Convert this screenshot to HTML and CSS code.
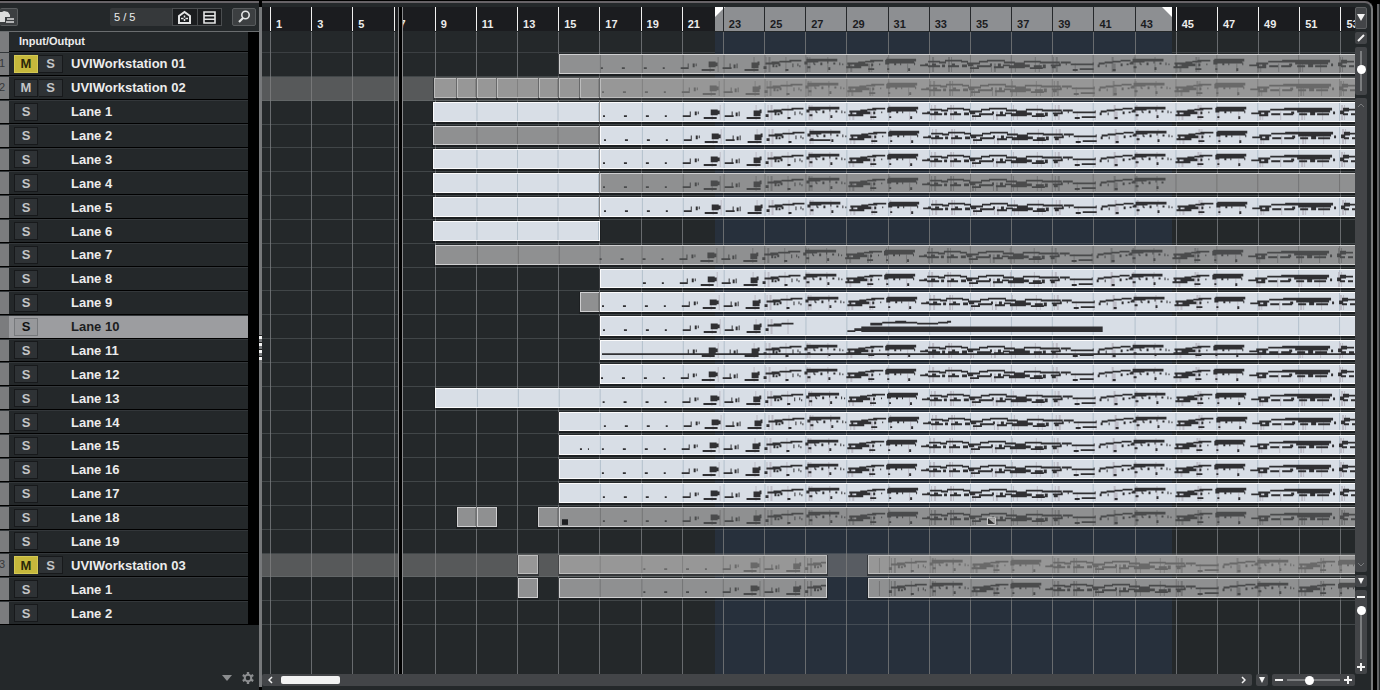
FILE: index.html
```html
<!DOCTYPE html>
<html lang="en">
<head>
  <meta charset="utf-8">
  <title>Project</title>
  <link rel="stylesheet" href="styles.css">
</head>
<body>

<div class="window">
  <aside class="track-panel">
    <div class="toolbar">
      <button class="tool-button tool-cut" aria-label="Track presets">
        <svg width="15" height="14" viewBox="0 0 15 14"><path fill="#dcdddd" d="M0 2h2l2-1 4 1 2 3v2H5v5H0z"/><path stroke="#dcdddd" stroke-width="1.600" d="M7 9h7M6 12h8"/></svg>
      </button>
      <span class="track-count">5 / 5</span>
      <div class="tool-group">
        <button aria-label="Home view">
          <svg width="15" height="15" viewBox="0 0 15 15"><path fill="none" stroke="#e4e5e5" stroke-width="2" d="M2 13V6l5.500-4L13 6v7z"/><path stroke="#e4e5e5" stroke-width="1.500" d="M7.500 5.500v2M7.500 9v2M4 8.500h2.500M8.500 8.500H11"/></svg>
        </button>
        <button aria-label="List view">
          <svg width="13" height="13" viewBox="0 0 13 13"><path fill="none" stroke="#e4e5e5" stroke-width="1.600" d="M1 1h11v11H1zM1 4.700h11M1 8.300h11"/></svg>
        </button>
      </div>
      <button class="tool-button" aria-label="Find tracks">
        <svg width="14" height="14" viewBox="0 0 14 14"><circle cx="8.500" cy="5" r="3.700" fill="none" stroke="#e4e5e5" stroke-width="1.600"/><path stroke="#e4e5e5" stroke-width="2.200" d="M6 8l-4 4"/></svg>
      </button>
    </div>
    <div class="io-row"><span>Input/Output</span></div>
    <div class="track-list" id="trackList"></div>
    <div class="track-footer">
      <button aria-label="Track options"><svg width="10" height="6"><path fill="#8b8d8f" d="M0 0h10L5 6z"/></svg></button>
      <button aria-label="Settings">
        <svg width="12" height="12" viewBox="0 0 12 12"><circle cx="6" cy="6" r="3.300" fill="none" stroke="#8b8d8f" stroke-width="2"/><path stroke="#8b8d8f" stroke-width="2.400" d="M6 0v2.500M6 9.500V12M.8 3l2 1.200M9.200 7.800l2 1.200M.8 9l2-1.200M9.200 4.200l2-1.200"/></svg>
      </button>
    </div>
  </aside>

  <div class="divider"><i></i><i></i><i></i><i></i></div>

  <main class="project">
    <div class="timeline">
      <div class="ruler" id="ruler"></div>
      <div class="canvas">
        <div class="selection" id="selection"></div>
        <div class="grid" id="grid"></div>
        <div class="lanes" id="lanes"></div>
      </div>
      <div class="playhead" id="playhead"></div>
    </div>

    <div class="side-bar">
      <button class="side-top" aria-label="Ruler options"><svg width="8" height="8"><path fill="#f2f2f2" d="M0 0h8L4 7z"/></svg></button>
      <button class="side-pencil" aria-label="Edit"><svg width="8" height="8"><path stroke="#f2f2f2" stroke-width="2" d="M1 7l6-6"/></svg></button>
      <div class="side-slider"><input type="range" class="vertical" value="45" aria-label="Waveform zoom"></div>
      <div class="side-scroll">
        <button aria-label="Scroll up"><svg width="8" height="5"><path fill="none" stroke="#77797b" d="M1 4l3-3 3 3"/></svg></button>
        <button aria-label="Scroll down"><svg width="8" height="5"><path fill="none" stroke="#77797b" d="M1 1l3 3 3-3"/></svg></button>
      </div>
      <button class="side-menu" aria-label="Vertical zoom presets"><svg width="6" height="6"><path fill="#f2f2f2" d="M0 0h6L3 6z"/></svg></button>
      <div class="side-zoom">
        <button aria-label="Zoom out vertically"><svg width="8" height="8"><path fill="#f2f2f2" d="M0 3h8v2H0z"/></svg></button>
        <input type="range" class="vertical" value="0" aria-label="Vertical zoom">
        <button aria-label="Zoom in vertically"><svg width="8" height="8"><path fill="#f2f2f2" d="M0 3h3V0h2v3h3v2H5v3H3V5H0z"/></svg></button>
      </div>
    </div>

    <div class="bottom-bar">
      <div class="bottom-scroll">
        <button aria-label="Scroll left"><svg width="5" height="8"><path fill="none" stroke="#f2f2f2" stroke-width="1.500" d="M4 1L1 4l3 3"/></svg></button>
        <div class="scroll-thumb"></div>
        <button aria-label="Scroll right"><svg width="5" height="8"><path fill="none" stroke="#f2f2f2" stroke-width="1.500" d="M1 1l3 3-3 3"/></svg></button>
      </div>
      <button class="bottom-menu" aria-label="Horizontal zoom presets"><svg width="6" height="6"><path fill="#f2f2f2" d="M0 0h6L3 6z"/></svg></button>
      <div class="bottom-zoom">
        <button aria-label="Zoom out"><svg width="8" height="8"><path fill="#f2f2f2" d="M0 3h8v2H0z"/></svg></button>
        <input type="range" value="40" aria-label="Horizontal zoom">
        <button aria-label="Zoom in"><svg width="8" height="8"><path fill="#f2f2f2" d="M0 3h3V0h2v3h3v2H5v3H3V5H0z"/></svg></button>
      </div>
    </div>
  </main>
  <div class="next-window"></div>
</div>

<script>
// positions are in timeline units, the visible part runs from VIEW_START to VIEW_END
const VIEW_START = 262;
const VIEW_END = 1355;
const SPAN = VIEW_END - VIEW_START;
const FIRST_BAR = 270;
const TWO_BARS = 41.17;
const RANGE = [715, 1172];

const percent = (value) => (value / SPAN) * 100 + "%";

// the riff: x, y, width, height
const intro = [
  [602, 13, 2, 1], [623, 13, 3, 1], [645, 13, 3, 1], [664, 13, 2, 1],
  [682, 13, 8, 1], [689, 9, 1, 4], [694, 9, 2, 3], [697, 9, 1, 2],
  [703, 15, 13, 1], [710, 7, 7, 5], [717, 8, 2, 3],
  [724, 13, 9, 1], [731, 9, 1, 4], [735, 10, 2, 3], [738, 9, 1, 4],
  [746, 15, 14, 1], [753, 8, 7, 5], [759, 7, 2, 3]
];
const rise = [
  [765, 12, 3, 2], [767, 8, 6, 1], [773, 7, 8, 2], [781, 6, 12, 1], [791, 5, 12, 1],
  [774, 10, 2, 2], [777, 11, 2, 1], [780, 9, 2, 2], [787, 15, 3, 1],
  [794, 9, 1, 3], [799, 9, 1, 2], [801, 11, 1, 1]
];
const flat = [
  [806, 7, 3, 2], [808, 4, 31, 2], [808, 6, 12, 1], [809, 12, 3, 1], [815, 7, 1, 2],
  [816, 9, 1, 1], [822, 8, 2, 2], [830, 13, 2, 2], [829, 6, 1, 2], [835, 8, 2, 1], [841, 8, 1, 2], [844, 9, 1, 1]
];
const turn = [
  [849, 8, 12, 1], [848, 12, 15, 1], [850, 10, 2, 1], [856, 10, 6, 2], [860, 7, 7, 1],
  [861, 9, 9, 2], [867, 6, 9, 1], [872, 5, 13, 1], [870, 14, 6, 1], [873, 9, 2, 2], [881, 9, 1, 1]
];
const bold = [
  [887, 5, 4, 4], [888, 4, 30, 2], [890, 6, 26, 2], [889, 14, 2, 1], [896, 8, 2, 2],
  [902, 8, 1, 2], [910, 14, 2, 2], [916, 8, 1, 2], [922, 10, 7, 1], [927, 9, 3, 2]
];
const weave = [
  [930, 6, 12, 1], [930, 11, 12, 1], [934, 9, 4, 1], [941, 7, 7, 1], [944, 10, 3, 2],
  [947, 5, 17, 1], [950, 11, 11, 1], [954, 9, 3, 2], [963, 6, 7, 1], [964, 10, 5, 2],
  [969, 8, 13, 1], [970, 10, 5, 1], [972, 13, 9, 1], [981, 6, 9, 1], [979, 11, 14, 1],
  [989, 5, 18, 1], [992, 9, 2, 2], [996, 12, 10, 1], [1000, 9, 3, 3], [1006, 7, 11, 1],
  [1005, 10, 7, 1], [1011, 11, 16, 2], [1016, 8, 11, 2], [1026, 6, 17, 1], [1027, 10, 5, 2],
  [1032, 13, 13, 1], [1036, 11, 8, 2], [1042, 7, 12, 1], [1045, 10, 3, 3], [1053, 7, 9, 1],
  [1053, 10, 8, 1], [1054, 12, 4, 1], [1061, 9, 2, 2], [1063, 7, 10, 1], [1068, 8, 1, 2],
  [1073, 9, 8, 1], [1080, 9, 15, 1], [1075, 15, 5, 1], [1082, 14, 8, 1], [1090, 14, 6, 1], [1095, 8, 1, 2]
];
const climb = [
  [1100, 10, 2, 2], [1101, 8, 6, 1], [1107, 7, 8, 1], [1115, 6, 8, 1], [1123, 5, 10, 1],
  [1108, 10, 1, 2], [1115, 15, 3, 1], [1123, 9, 2, 2], [1129, 9, 2, 1], [1132, 8, 1, 1]
];
const ending = [
  [1252, 10, 10, 1], [1259, 8, 12, 1], [1260, 12, 9, 1], [1271, 6, 14, 1], [1265, 9, 4, 2],
  [1272, 11, 9, 1], [1285, 5, 48, 2], [1284, 11, 10, 1], [1292, 9, 3, 2], [1298, 7, 33, 2],
  [1300, 11, 8, 1], [1311, 10, 5, 2], [1318, 11, 12, 1], [1334, 9, 2, 2],
  [1341, 8, 4, 3], [1344, 5, 6, 3], [1350, 6, 7, 1], [1344, 11, 5, 1], [1352, 11, 5, 1]
];
const move = (notes, dx) => notes.map(([x, y, w, h]) => [x + dx, y, w, h]);
const riff = [
  ...intro, ...rise, ...flat, ...turn, ...bold, ...weave, ...climb,
  ...move(flat, 327), ...move(turn, 328), ...move(bold.slice(0, 8), 329), ...ending
];
const solo = [
  ...intro, ...rise.slice(0, 4),
  [847, 14, 8, 1], [854, 12, 8, 2], [861, 10, 242, 5],
  [870, 6, 12, 2], [882, 5, 13, 1], [895, 4, 11, 2], [906, 5, 11, 1], [917, 6, 21, 1], [938, 5, 10, 1], [947, 4, 4, 1]
];
const ghosts = [
  711, 719, 755, 767, 770, 787, 808, 811, 829, 849, 852, 870, 873, 889, 909, 931, 934, 950, 953,
  972, 975, 993, 996, 1013, 1017, 1037, 1041, 1055, 1058, 1077, 1095, 1114, 1116, 1136, 1157,
  1179, 1182, 1198, 1201, 1218, 1239, 1260, 1263, 1281, 1302, 1305, 1323, 1342, 1345
];

const full = (start, look = "", notes = riff, dx = 0) => ({ start, end: 1358, look, notes, dx });
const empty = (start, end, look = "") => ({ start, end, look, notes: [], dx: 0 });
const third = (look) => [
  empty(518, 538, look),
  { start: 559, end: 827, look, notes: riff, dx: 41 },
  { start: 868, end: 1358, look, notes: riff.filter((n) => n[0] > 764), dx: 123 }
];

const tracks = [
  { name: "UVIWorkstation 01", number: 1, mute: true, clips: [full(559, "muted", riff, -2)] },
  { name: "UVIWorkstation 02", number: 2, folder: true, clips: [
    empty(434, 457, "shade"), empty(457, 477, "shade"), empty(477, 497, "shade"), empty(497, 539, "shade"),
    empty(539, 559, "shade"), empty(559, 580, "shade"), empty(580, 600, "shade"), full(600, "shade", riff, -1)] },
  { name: "Lane 1", clips: [empty(433, 600), full(600)] },
  { name: "Lane 2", clips: [empty(433, 600, "muted"), full(600, "", [...riff, [808, 13, 21, 1]], 1)] },
  { name: "Lane 3", clips: [empty(433, 600), full(600)] },
  { name: "Lane 4", clips: [empty(433, 600), full(600, "muted", riff.filter((n) => n[0] < 1163))] },
  { name: "Lane 5", clips: [empty(433, 600), full(600, "", riff, 1)] },
  { name: "Lane 6", clips: [empty(433, 600)] },
  { name: "Lane 7", clips: [full(435, "muted", riff, -3)] },
  { name: "Lane 8", clips: [full(600, "", riff.slice(2), -3)] },
  { name: "Lane 9", clips: [empty(580, 600, "muted"), full(600, "", riff, -1)] },
  { name: "Lane 10", selected: true, clips: [full(600, "", solo)] },
  { name: "Lane 11", clips: [full(600, "", [...riff.slice(4), [603, 13, 755, 1]], -2)] },
  { name: "Lane 12", clips: [full(600, "", riff, -2)] },
  { name: "Lane 13", clips: [full(435, "", riff, 0)] },
  { name: "Lane 14", clips: [full(559, "", riff, 1)] },
  { name: "Lane 15", clips: [full(559, "", [[580, 13, 2, 1], [588, 13, 1, 1], ...riff], -1)] },
  { name: "Lane 16", clips: [full(559, "", riff, -1)] },
  { name: "Lane 17", clips: [full(559)] },
  { name: "Lane 18", clips: [empty(457, 477, "muted"), empty(477, 497, "muted"), empty(538, 559, "muted"),
    { ...full(559, "muted"), handles: true }] },
  { name: "Lane 19", clips: [] },
  { name: "UVIWorkstation 03", number: 3, mute: true, folder: true, clips: third("shade") },
  { name: "Lane 1", clips: third("muted") },
  { name: "Lane 2", clips: [] }
];

const box = (x, y, w, h) => `M${x} ${y}h${w}v${h}h${-w}z`;

function clipPicture(clip) {
  let beats = "";
  for (let x = FIRST_BAR; x < VIEW_END; x += TWO_BARS) {
    if (x > clip.start + 2) beats += box(Math.round(x), 0, 1, 20);
  }
  const notes = clip.notes.map(([x, y, w, h]) => box(x + clip.dx, y, w, h + 1)).join("");
  const last = Math.max(0, ...clip.notes.map((n) => n[0] + 4));
  const lines = clip.notes.length
    ? ghosts.filter((x) => (clip.notes === solo ? x < 800 : x < last)).map((x) => box(x + clip.dx, x % 3 ? 2 : 9, x % 2 ? 1 : 2, x % 3 ? 16 : 9)).join("")
    : "";
  const handles = clip.handles
    ? `<path fill="#1f2022" d="${box(561, 12, 6, 6)}"/><path fill="#333" stroke="#d5d5d5" d="M987.5 10.500h8v7h-8z"/><path fill="#aaa" d="M988 11h7v6z"/>`
    : "";
  return `<svg viewBox="${clip.start} 0 ${clip.end - clip.start} 19" preserveAspectRatio="none">
    <path class="beats" d="${beats}"/><path class="ghost" d="${lines}"/><path class="note" d="${notes}"/>${handles}</svg>`;
}

function drawTracks() {
  const list = document.getElementById("trackList");
  const lanes = document.getElementById("lanes");
  tracks.forEach((track) => {
    const main = track.number !== undefined;
    const mute = main ? `<button class="${track.mute ? "on" : ""}">M</button>` : "";
    list.innerHTML += `<div class="track ${main ? "main" : ""} ${track.selected ? "selected" : ""}">
      ${main ? `<span class="track-number">${track.number}</span>` : ""}
      <div class="switches">${mute}<button>S</button></div>
      <span>${track.name}</span></div>`;
    const clips = track.clips.map((clip) => `<div class="clip ${clip.look}"
      style="left:${percent(clip.start - VIEW_START)};width:${percent(clip.end - clip.start)}">${clipPicture(clip)}</div>`);
    lanes.innerHTML += `<div class="lane ${track.folder ? "folder" : ""}">${clips.join("")}</div>`;
  });
}

function drawRuler() {
  const place = `left:${percent(RANGE[0] - VIEW_START)};width:${percent(RANGE[1] - RANGE[0])}`;
  let ruler = `<div class="ruler-range" style="${place}">
    <svg width="10" height="10"><path fill="#fff" d="M0 0h10L0 10z"/></svg>
    <svg width="10" height="10"><path fill="#fff" d="M0 0h10v10z"/></svg></div>`;
  let grid = "";
  for (let bar = 1, x = FIRST_BAR; x < VIEW_END; bar += 2, x += TWO_BARS) {
    const left = percent(x - VIEW_START);
    const inRange = x > RANGE[0] && x < RANGE[1];
    ruler += `<span class="bar-number ${inRange ? "in-range" : ""}" style="left:${left}">${bar}</span>`;
    grid += `<i style="left:${left}"></i>`;
  }
  document.getElementById("ruler").innerHTML = ruler;
  document.getElementById("grid").innerHTML = grid;
  document.getElementById("selection").style.cssText = place;
  document.getElementById("playhead").style.left = percent(398 - VIEW_START);
}

drawTracks();
drawRuler();
</script>

</body>
</html>
```
FILE: styles.css
```css
* {
  box-sizing: border-box;
}
body {
  margin: 0;
  background: #000;
  color: #ececec;
  font-family: "Liberation Sans", Arial, sans-serif;
  font-size: 13px;
  font-weight: bold;
}
button {
  display: flex;
  align-items: center;
  justify-content: center;
  padding: 0;
  border: 0;
  background: none;
  color: inherit;
  font: inherit;
}
svg {
  display: block;
}
.window {
  display: flex;
  height: 100vh;
  overflow: hidden;
}

/* track list */
.track-panel {
  display: flex;
  flex-direction: column;
  flex: none;
  width: 259px;
  border-top: 1px solid #000;
  background: #24282a;
}
.toolbar {
  display: flex;
  align-items: center;
  flex: none;
  height: 31px;
  padding-right: 3px;
  border-top: 2px solid #676367;
  border-bottom: 1px solid #6b6e70;
}
.tool-button {
  width: 24px;
  height: 18px;
  border: 1px solid #595c5e;
  border-radius: 2px;
  background: #3c3f41;
}
.tool-cut {
  width: 18px;
  margin-right: 92px;
  border-left: 0;
  justify-content: flex-start;
}
.track-count {
  width: 62px;
  height: 18px;
  padding-left: 4px;
  border-radius: 2px 0 0 2px;
  background: #36393b;
  font-size: 11px;
  font-weight: normal;
  line-height: 18px;
}
.tool-group {
  display: flex;
  width: 50px;
  height: 18px;
  margin-right: 10px;
  border: 1px solid #4b4e50;
  background: #1b1d1f;
}
.tool-group button {
  flex: 1;
}
.tool-group button + button {
  border-left: 1px solid #4b4e50;
}
.io-row {
  flex: none;
  height: 20px;
  padding-right: 11px;
  border-left: 9px solid #7b7c7e;
  background: #000;
  font-size: 11px;
}
.io-row span {
  display: block;
  height: 19px;
  padding-left: 10px;
  background: #24282a;
  line-height: 19px;
}
.track-list {
  display: grid;
  grid-template-rows: repeat(24, 1fr);
  flex: 1;
  min-height: 0;
  background: #000;
}
.track {
  display: flex;
  align-items: center;
  min-height: 0;
  margin-right: 11px;
  border-top: 1px solid #33373a;
  border-bottom: 1px solid #000;
  background: #24282a;
}
.track::before {
  content: "";
  align-self: stretch;
  width: 9px;
  background: #7b7c7e;
}
.track.main::before {
  content: none;
}
.track.selected {
  background: #9c9da0;
  color: #1c1d1f;
}
.track-number {
  align-self: stretch;
  width: 9px;
  background: #7b7c7e;
  color: #36383a;
  font-size: 11px;
  font-weight: normal;
  line-height: 20px;
  text-indent: -1px;
}
.switches {
  display: flex;
  gap: 1px;
  width: 50px;
  margin: 0 7px 0 5px;
}
.switches button {
  width: 24px;
  height: 18px;
  border: 1px solid #17191b;
  background: #2e3235;
  color: #c3c5c7;
}
.switches button + button {
  border-left: 0;
}
.switches .on {
  background: #c6b83c;
  border-color: #d4c953;
  color: #2b270a;
}
.selected .switches button {
  border-color: #77797c;
  background: #97989b;
  color: #111;
}
.track-footer {
  display: flex;
  align-items: center;
  justify-content: flex-end;
  flex: none;
  gap: 10px;
  height: 65px;
  padding: 40px 5px 0 0;
}

.divider {
  display: flex;
  flex-direction: column;
  justify-content: center;
  gap: 3px;
  flex: none;
  width: 3px;
  margin: 7px 0 3px;
  background: #77797b;
}
.divider i {
  height: 4px;
  background: #f4f4f4;
  border-top: 1px solid #222;
}

/* project area */
.project {
  display: grid;
  grid-template-columns: 1fr 12px;
  grid-template-rows: 1fr 12px;
  flex: 1;
  min-width: 0;
  margin-top: 1px;
  padding: 4px 4px 4px 0;
  border-top: 2px solid #676367;
  border-right: 2px solid #77797b;
  border-radius: 0 8px 0 0;
  background: #24282a;
}
.timeline {
  display: flex;
  flex-direction: column;
  position: relative;
  min-width: 0;
  overflow: hidden;
}
.ruler {
  position: relative;
  height: 25px;
  border-bottom: 1px solid #24282a;
  background: #1b1c1f;
}
.ruler-range {
  position: absolute;
  top: 0;
  bottom: 0;
  background: #8d8f92;
}
.ruler-range svg {
  position: absolute;
  top: 0;
  left: 0;
}
.ruler-range svg + svg {
  left: auto;
  right: 0;
}
.bar-number {
  position: absolute;
  top: 0;
  height: 24px;
  padding: 10px 0 0 5px;
  border-left: 1px solid #f0f0f0;
  font-size: 11px;
  line-height: 14px;
}
.bar-number.in-range {
  border-color: #26282b;
  color: #1b1c1f;
}
.canvas {
  display: flex;
  flex-direction: column;
  flex: 1;
  position: relative;
  padding: 20px 0 49px;
}
.selection {
  position: absolute;
  top: 0;
  bottom: 0;
  background: #27303c;
}
.grid i {
  position: absolute;
  top: 0;
  bottom: 0;
  width: 1px;
  background: #686b6e;
}
.lanes {
  display: grid;
  grid-template-rows: repeat(24, 1fr);
  flex: 1;
  border-top: 1px solid #3b3f42;
}
.lane {
  position: relative;
  min-height: 0;
  border-bottom: 1px solid rgba(120, 125, 130, 0.35);
}
.lane.folder {
  background: rgba(130, 130, 130, 0.55);
}
.clip {
  position: absolute;
  top: 1px;
  bottom: 2px;
  overflow: hidden;
  border: 1px solid #fbfbfc;
  background: #d8dee6;
  box-shadow: 0 1px 0 1px rgba(20, 22, 24, 0.5);
}
.clip svg {
  width: 100%;
  height: 100%;
}
.clip .beats {
  fill: #b3c0cc;
}
.clip .ghost {
  fill: #bdbcc6;
}
.clip .note {
  fill: #303033;
}
.clip.muted {
  border-color: #cfcfd0;
  background: #8f9091;
}
.clip.muted .beats,
.clip.muted .ghost {
  fill: #747576;
}
.clip.muted .note {
  fill: #4a4b4c;
}
.clip.shade {
  border-color: #bcbcbc;
  background: #979797;
}
.clip.shade .beats,
.clip.shade .ghost {
  fill: #808080;
}
.clip.shade .note {
  fill: #696969;
}
.playhead {
  position: absolute;
  top: 0;
  bottom: 0;
  width: 5px;
  border-left: 1px solid #88898b;
  border-right: 1px solid #88898b;
  background: #000;
}

/* scroll and zoom bars */
.side-bar {
  display: flex;
  flex-direction: column;
  gap: 3px;
}
.side-bar > *,
.bottom-bar > * {
  border-radius: 2px;
  background: #434548;
}
.side-top {
  height: 22px;
  border: 1px solid #5d5f61;
}
.side-pencil {
  height: 12px;
}
.side-slider {
  height: 48px;
  padding: 4px 0;
}
.side-scroll {
  display: flex;
  flex-direction: column;
  align-items: center;
  justify-content: space-between;
  flex: 1;
  padding: 5px 0;
}
.side-menu {
  height: 12px;
}
.side-zoom {
  display: flex;
  flex-direction: column;
  align-items: center;
  justify-content: space-between;
  height: 84px;
  padding: 3px 0;
}
.side-zoom input {
  height: 53px;
}
.side-slider input {
  height: 40px;
}
input[type="range"] {
  appearance: none;
  min-width: 0;
  margin: 0;
  background: linear-gradient(#7b7d7f, #7b7d7f) center / 100% 2px no-repeat;
}
input.vertical {
  display: block;
  width: 12px;
  writing-mode: vertical-lr;
  background-size: 2px 100%;
}
input[type="range"]::-webkit-slider-thumb {
  appearance: none;
  width: 9px;
  height: 9px;
  border-radius: 50%;
  background: #fff;
}
.bottom-bar {
  grid-column: 1 / 3;
  display: flex;
  gap: 4px;
  padding-right: 12px;
}
.bottom-scroll {
  display: flex;
  align-items: center;
  flex: 1;
  padding: 0 6px;
}
.bottom-scroll button:last-child {
  margin-left: auto;
}
.scroll-thumb {
  width: 59px;
  height: 8px;
  margin-left: 8px;
  border-radius: 2px;
  background: #f2f2f2;
}
.bottom-menu {
  width: 12px;
}
.bottom-zoom {
  display: flex;
  align-items: center;
  justify-content: space-between;
  width: 83px;
  padding: 0 3px;
}
.bottom-zoom input {
  width: 53px;
  height: 12px;
}
.next-window {
  width: 3px;
  margin: 4px 0 0 4px;
  border-left: 2px solid #626466;
  background: #24282a;
}
```
